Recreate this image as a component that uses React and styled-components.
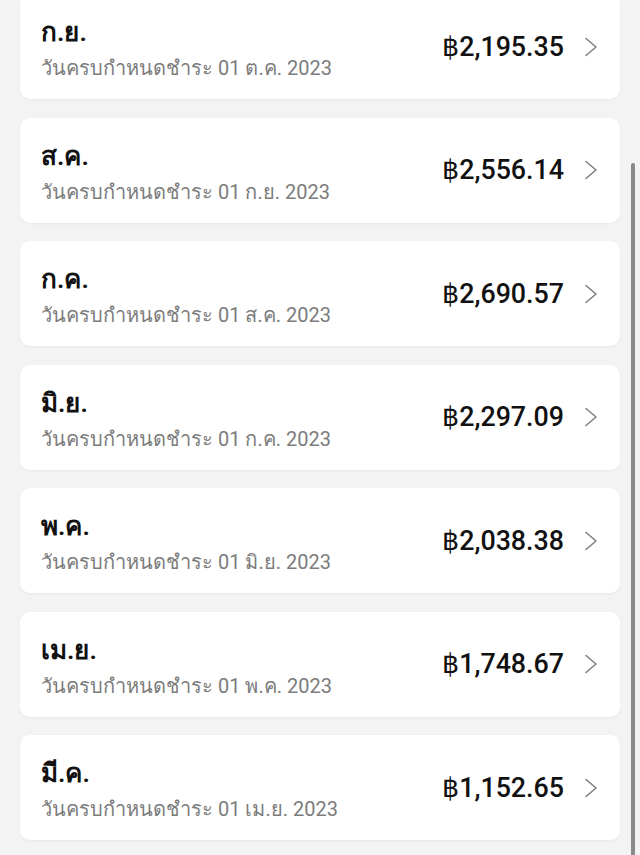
import React from 'react';
import styled, { createGlobalStyle } from 'styled-components';

const GlobalStyle = createGlobalStyle`
  html, body {
    margin: 0;
    padding: 0;
    background: #f3f3f3;
    overflow: hidden;
  }
  body {
    font-family: Roboto, 'Noto Sans', sans-serif;
  }
`;

const Page = styled.div`
  position: relative;
  height: 855px;
  overflow: hidden;
  background: #f3f3f3;
`;

const List = styled.div`
  display: flex;
  flex-direction: column;
  gap: 18.5px;
  padding: 0 20px;
  margin-top: -6px;
`;

const Card = styled.div`
  height: 105px;
  box-sizing: border-box;
  background: #fff;
  border-radius: 10px;
  box-shadow: 0 1px 3px rgba(0, 0, 0, 0.05);
  display: flex;
  align-items: center;
  padding: 0 22px 0 21px;
`;

const Info = styled.div`
  flex: 1;
  display: flex;
  flex-direction: column;
  padding-top: 5px;
`;

const Month = styled.div`
  font-size: 26px;
  font-weight: 600;
  color: #111;
  line-height: 30px;
`;

const DueDate = styled.div`
  font-size: 20px;
  color: #7c7c7c;
  line-height: 26px;
  margin-top: 8px;
`;

const Amount = styled.div`
  font-size: 26.8px;
  font-weight: 500;
  color: #111;
  margin-right: 20px;
`;

const Chevron = styled.svg`
  width: 14px;
  height: 20px;
  flex: none;
`;

const ScrollThumb = styled.div`
  position: absolute;
  right: 5px;
  top: 163px;
  bottom: -10px;
  width: 4px;
  border-radius: 2px;
  background: #8a8a8a;
`;

const bills = [
  { month: 'ก.ย.', due: '01 ต.ค. 2023', amount: '2,195.35' },
  { month: 'ส.ค.', due: '01 ก.ย. 2023', amount: '2,556.14' },
  { month: 'ก.ค.', due: '01 ส.ค. 2023', amount: '2,690.57' },
  { month: 'มิ.ย.', due: '01 ก.ค. 2023', amount: '2,297.09' },
  { month: 'พ.ค.', due: '01 มิ.ย. 2023', amount: '2,038.38' },
  { month: 'เม.ย.', due: '01 พ.ค. 2023', amount: '1,748.67' },
  { month: 'มี.ค.', due: '01 เม.ย. 2023', amount: '1,152.65' },
];

const App = () => (
  <Page>
    <GlobalStyle />
    <List>
      {bills.map((bill) => (
        <Card key={bill.month}>
          <Info>
            <Month>{bill.month}</Month>
            <DueDate>วันครบกำหนดชำระ {bill.due}</DueDate>
          </Info>
          <Amount>฿{bill.amount}</Amount>
          <Chevron viewBox="0 0 14 20">
            <polyline points="2,1.5 12,10 2,18.5" fill="none" stroke="#808080" strokeWidth="1.6" strokeLinecap="round" strokeLinejoin="round" />
          </Chevron>
        </Card>
      ))}
    </List>
    <ScrollThumb />
  </Page>
);

export default App;
